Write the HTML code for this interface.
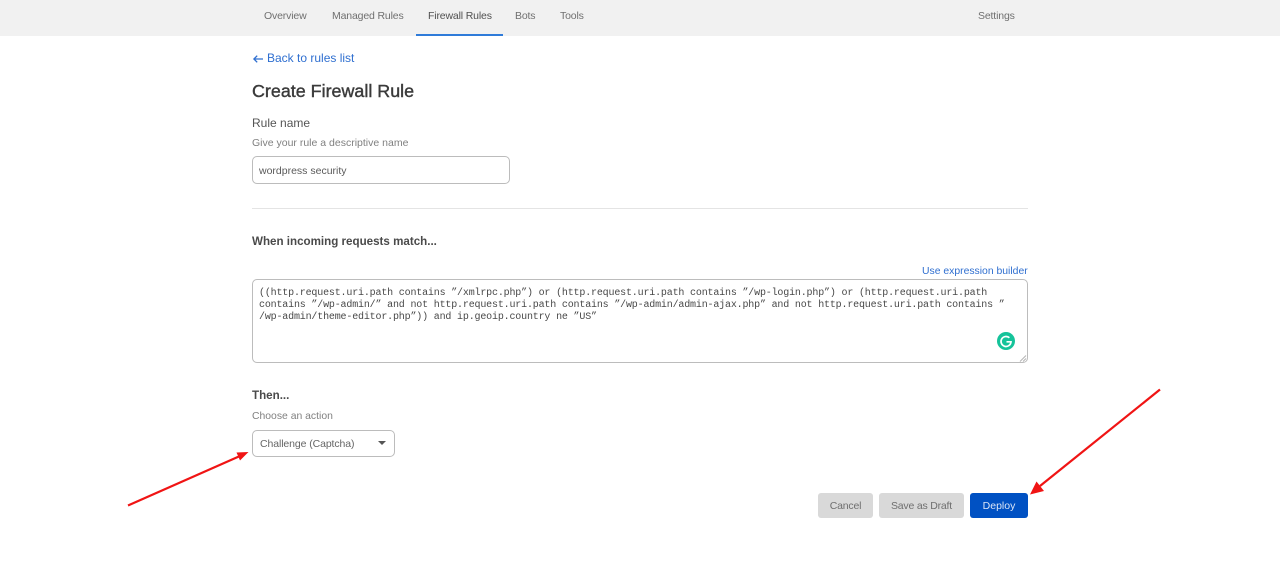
<!DOCTYPE html>
<html lang="en">
<head>
<meta charset="utf-8">
<title>Create Firewall Rule</title>
<style>
html,body{margin:0;padding:0;background:#fff;width:1280px;height:566px;overflow:hidden}
body{position:relative;font-family:"Liberation Sans",sans-serif;color:#4d4d4d}
.t{position:absolute;white-space:nowrap;line-height:16px}
.n{font-size:10.5px;letter-spacing:-.15px;color:#707070}
.box{position:absolute;box-sizing:border-box;background:#fff;border:1px solid #bcbcbc;border-radius:5px}
.btn{position:absolute;box-sizing:border-box;top:493px;height:25px;border-radius:3px;background:#d9d9d9;color:#6f6f6f;font-size:10.5px;letter-spacing:-.2px;line-height:26px;text-align:center;white-space:nowrap}
.m{position:absolute;left:259px;white-space:nowrap;font-family:"Liberation Mono",monospace;font-size:10px;letter-spacing:-.176px;line-height:12px;color:#484848}
</style>
</head>
<body>
<div style="position:absolute;left:0;top:0;width:1280px;height:36px;background:#f1f1f1"></div>
<div style="position:absolute;left:416px;top:34px;width:87px;height:2px;background:#2f7bd9"></div>
<div class="t n" style="left:264px;top:8px">Overview</div>
<div class="t n" style="left:332px;top:8px">Managed Rules</div>
<div class="t n" style="left:428px;top:8px;color:#505050">Firewall Rules</div>
<div class="t n" style="left:515px;top:8px">Bots</div>
<div class="t n" style="left:560px;top:8px">Tools</div>
<div class="t n" style="left:978px;top:8px">Settings</div>

<svg style="position:absolute;left:252px;top:53px" width="12" height="12" viewBox="0 0 12 12"><path d="M11 6H2M5.200 2.700L1.900 6L5.200 9.300" fill="none" stroke="#2f6fd0" stroke-width="1.300"/></svg>
<div class="t" style="left:267px;top:50px;font-size:12px;color:#2f6fd0">Back to rules list</div>
<div class="t" style="left:252px;top:80px;font-size:17.900px;line-height:22px;color:#3a3a3a;-webkit-text-stroke:.4px #3a3a3a">Create Firewall Rule</div>
<div class="t" style="left:252px;top:115px;font-size:12px;color:#555">Rule name</div>
<div class="t" style="left:252px;top:135px;font-size:10.500px;color:#808080">Give your rule a descriptive name</div>
<div class="box" style="left:252px;top:156px;width:258px;height:28px"></div>
<div class="t" style="left:259px;top:163px;font-size:10.500px;color:#5a5a5a">wordpress security</div>
<div style="position:absolute;left:252px;top:208px;width:776px;height:1px;background:#e4e4e4"></div>

<div class="t" style="left:252px;top:234px;font-size:11.600px;font-weight:700;color:#4a4a4a">When incoming requests match...</div>
<div class="t" style="left:922px;top:264px;font-size:10.400px;color:#2f6fd0">Use expression builder</div>
<div class="box" style="left:252px;top:279px;width:776px;height:84px"></div>
<div class="m" style="top:288px">((http.request.uri.path contains ”/xmlrpc.php”) or (http.request.uri.path contains ”/wp-login.php”) or (http.request.uri.path</div>
<div class="m" style="top:300px">contains ”/wp-admin/” and not http.request.uri.path contains ”/wp-admin/admin-ajax.php” and not http.request.uri.path contains ”</div>
<div class="m" style="top:312px">/wp-admin/theme-editor.php”)) and ip.geoip.country ne ”US”</div>
<svg style="position:absolute;left:996px;top:332px" width="32" height="31" viewBox="0 0 32 31">
<circle cx="10" cy="9" r="9" fill="#15c39a"/>
<path d="M13.400 5.800A5 5 0 1 0 15 9.800H10.500" fill="none" stroke="#fff" stroke-width="1.700"/>
<path d="M24 29.500L30 23.500M27 29.500L30 26.500" stroke="#b5b5b5" stroke-width="1" fill="none"/>
</svg>

<div class="t" style="left:252px;top:388px;font-size:11.600px;font-weight:700;color:#4a4a4a">Then...</div>
<div class="t" style="left:252px;top:409px;font-size:10.400px;color:#808080">Choose an action</div>
<div class="box" style="left:252px;top:430px;width:143px;height:27px"></div>
<div class="t" style="left:260px;top:436px;font-size:10.500px;letter-spacing:-.1px;color:#666">Challenge (Captcha)</div>
<div style="position:absolute;left:378px;top:441px;width:0;height:0;border-left:4.500px solid transparent;border-right:4.500px solid transparent;border-top:4.500px solid #555"></div>

<div class="btn" style="left:818px;width:55px">Cancel</div>
<div class="btn" style="left:879px;width:85px">Save as Draft</div>
<div class="btn" style="left:970px;width:58px;background:#0051c3;color:#dbe6f7;letter-spacing:0">Deploy</div>

<svg style="position:absolute;left:0;top:0" width="1280" height="566" viewBox="0 0 1280 566">
<path d="M128 505.500L240 456" stroke="#f01414" stroke-width="2.200" fill="none"/>
<path d="M248.500 452L236.500 452.500L240 460.500Z" fill="#f01414"/>
<path d="M1160 389.500L1040 486" stroke="#f01414" stroke-width="2.200" fill="none"/>
<path d="M1030 494.500L1036.500 481.500L1044 491Z" fill="#f01414"/>
</svg>
</body>
</html>
